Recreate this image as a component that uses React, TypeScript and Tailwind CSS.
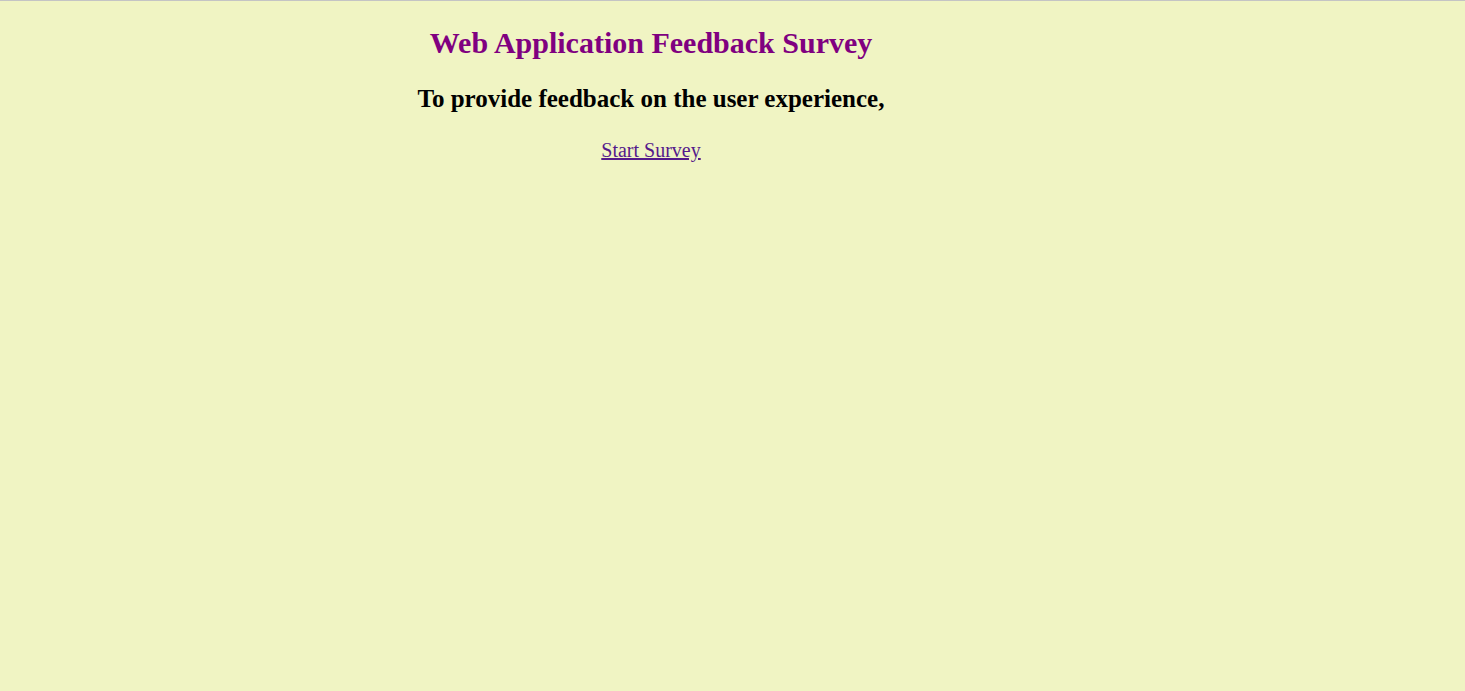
export default function App() {
  return (
    <div className="min-h-screen border-t border-[#c4c4c4] bg-[#f0f4c3] font-['Liberation_Serif',serif]">
      <div className="w-[1302px] text-center">
        <h1 className="pt-[24px] text-[30px] leading-[36px] font-bold text-[#800080]">
          Web Application Feedback Survey
        </h1>
        <h2 className="mt-[24px] text-[25px] leading-[28px] font-bold text-black">
          To provide feedback on the user experience,
        </h2>
        <div className="mt-[26px] text-[20px] leading-[23px]">
          <a href="#" className="text-[#551a8b] underline">
            Start Survey
          </a>
        </div>
      </div>
    </div>
  );
}
